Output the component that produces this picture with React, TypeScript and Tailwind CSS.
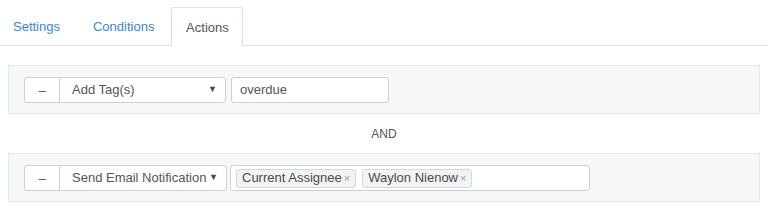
import React from "react";

const font = { fontFamily: '"Liberation Sans", Arial, sans-serif' };

function Tag({ label }: { label: string }) {
  return (
    <span className="flex items-center h-[19px] px-[5px] mr-[6px] rounded-[3px] border border-[#d4d8dd] bg-[#f1f3f5] text-[13px] text-[#4a4a4a]">
      {label}
      <span className="ml-[2px] text-[11px] text-[#999]">×</span>
    </span>
  );
}

function ActionRow({ action, width, children }: { action: string; width: string; children: React.ReactNode }) {
  return (
    <div className="mx-2 border border-[#e3e6ea] bg-[#f6f7f7] px-[15px] pt-[11px] pb-[10px] flex">
      <div className="flex h-[26px] rounded-[3px] border border-[#ccd0d4] bg-white">
        <button className="w-[35px] border-r border-[#ccd0d4] text-[#555] text-[13px] leading-none">–</button>
        <div className={`${width} flex items-center justify-between pl-[12px] pr-[8px] text-[13px] text-[#555]`}>
          <span>{action}</span>
          <span className="text-[9px] text-[#444]">▼</span>
        </div>
      </div>
      {children}
    </div>
  );
}

export default function App() {
  return (
    <div className="w-[768px] h-[209px] bg-white" style={font}>
      <div className="flex h-[46px] pt-[7px] border-b border-[#dde0e3]">
        <div className="pl-[13px] pr-[16px] pt-[10px] text-[13px] text-[#3a87d8]">Settings</div>
        <div className="pl-[17px] pr-[17px] pt-[10px] text-[13px] text-[#3a87d8]">Conditions</div>
        <div className="-mb-px w-[72px] text-center pt-[10px] text-[13px] text-[#555] bg-white border border-b-0 border-[#dde0e3] rounded-t-[3px]">
          Actions
        </div>
      </div>
      <div className="h-[19px]" />
      <ActionRow action="Add Tag(s)" width="w-[165px]">
        <div className="ml-[5px] w-[158px] h-[26px] rounded-[3px] border border-[#ccd0d4] bg-white px-[8px] flex items-center text-[13px] text-[#555]">
          overdue
        </div>
      </ActionRow>
      <div className="h-[39px] flex items-center justify-center text-[12px] text-[#555]">AND</div>
      <ActionRow action="Send Email Notification" width="w-[166px]">
        <div className="ml-[3px] w-[360px] h-[26px] rounded-[3px] border border-[#ccd0d4] bg-white pl-[5px] flex items-center">
          <Tag label="Current Assignee" />
          <Tag label="Waylon Nienow" />
        </div>
      </ActionRow>
    </div>
  );
}
